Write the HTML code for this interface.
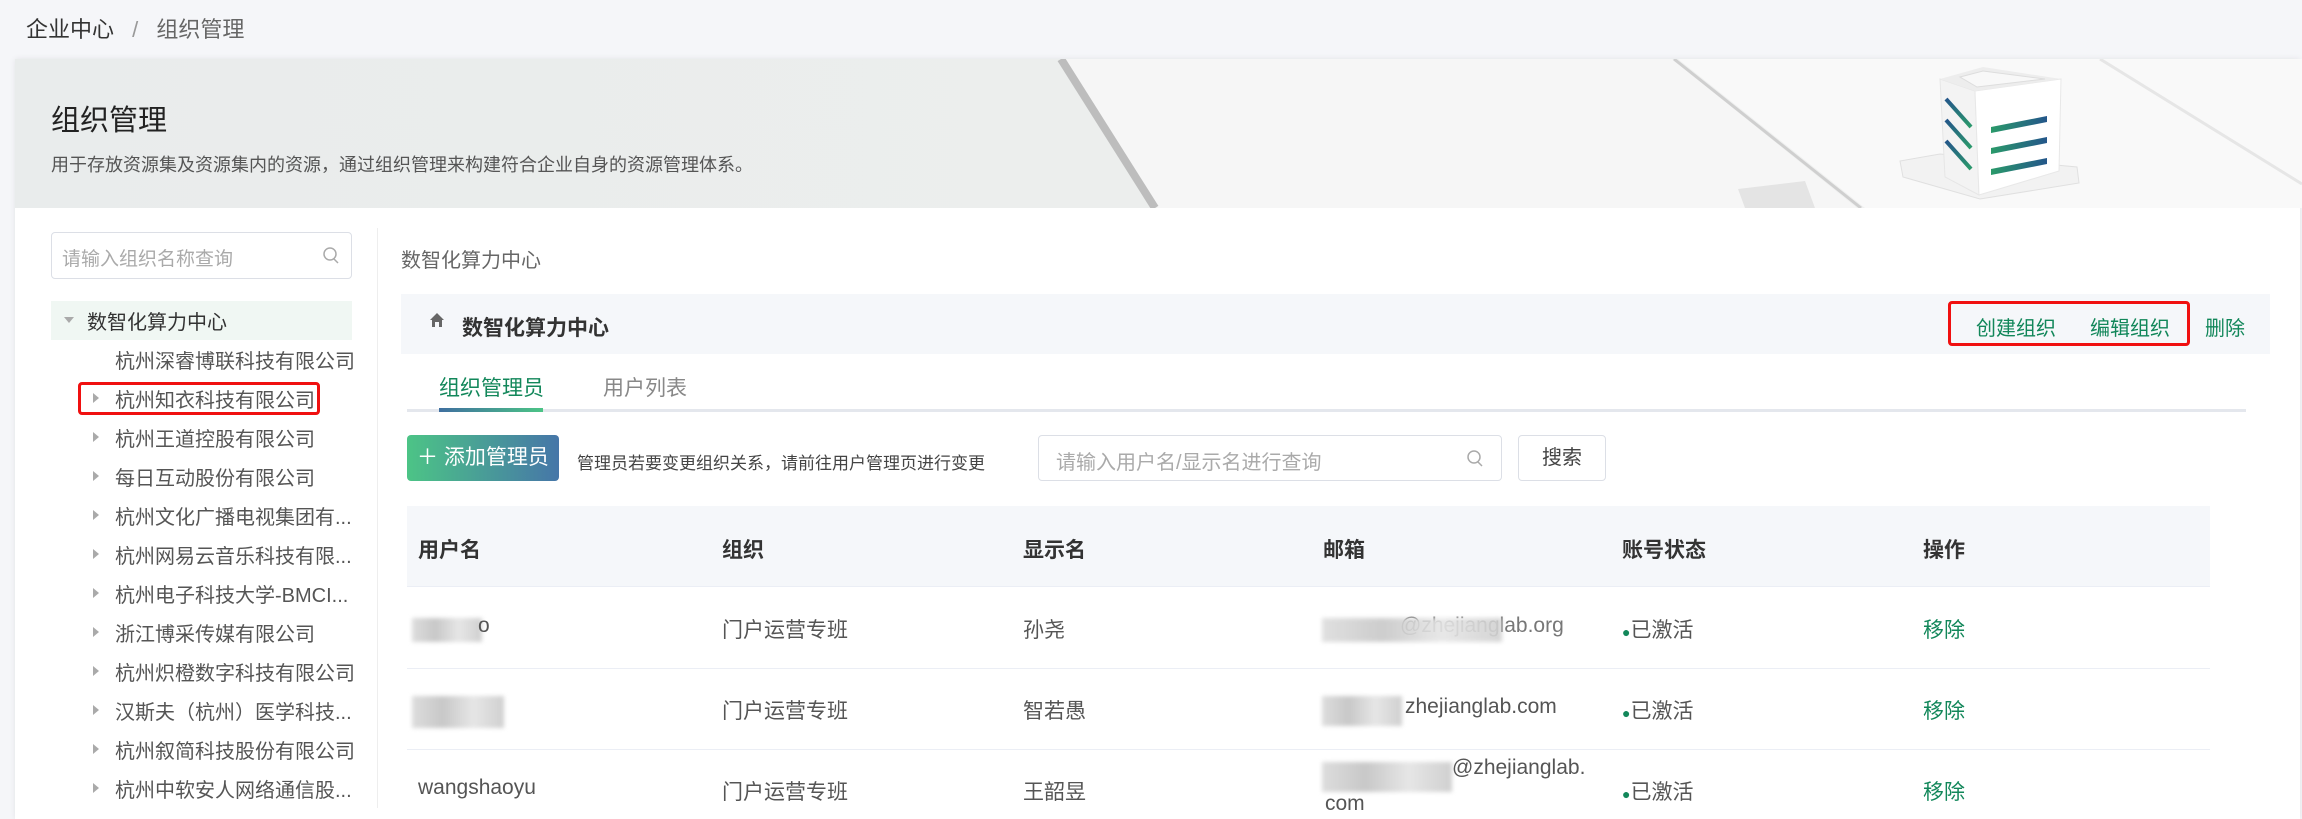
<!DOCTYPE html>
<html><head><meta charset="utf-8"><style>
*{margin:0;padding:0;box-sizing:border-box}
body{width:2302px;height:808px;overflow:hidden;background:#f5f6f9;font-family:"Liberation Sans","Noto Sans CJK SC",sans-serif;color:#333;position:relative}
.a{position:absolute;white-space:nowrap}
.g{color:#12875a}
.tree{font-size:20px;color:#555}
.tri{position:absolute;width:0;height:0;border-left:6px solid #aaa;border-top:5px solid transparent;border-bottom:5px solid transparent}
.th{font-size:21px;font-weight:bold;color:#333}
.td{font-size:21px;color:#555}
.blur{position:absolute;background:linear-gradient(90deg,#ddd,#c8c8c8,#e6e6e6,#d0d0d0);filter:blur(2px)}
</style></head><body>
<div class="a" style="left:26px;top:12px;font-size:22px;color:#333">企业中心 <span style="color:#999;margin:0 12px">/</span> <span style="color:#666">组织管理</span></div>

<div class="a" style="left:15px;top:59px;width:2285px;height:760px;background:#fff;box-shadow:0 0 6px rgba(0,0,0,.08)"></div>
<!-- banner -->
<svg class="a" style="left:15px;top:59px" width="2287" height="149">
<defs><linearGradient id="bg" x1="0" x2="1"><stop offset="0" stop-color="#e9ecec"/><stop offset=".5" stop-color="#eceeed"/><stop offset="1" stop-color="#f2f2f2"/></linearGradient>
<linearGradient id="st" x1="0" x2="1"><stop offset="0" stop-color="#2a9a6a"/><stop offset="1" stop-color="#24568a"/></linearGradient>
<linearGradient id="st2" x1="0" x2="0" y1="0" y2="1"><stop offset="0" stop-color="#24568a"/><stop offset="1" stop-color="#2a9a6a"/></linearGradient></defs>
<rect width="2287" height="149" fill="url(#bg)"/>
<polygon points="1050,0 1657,0 1842,149 1142,149" fill="#f6f6f6"/>
<line x1="1046" y1="0" x2="1140" y2="149" stroke="#bdbdbd" stroke-width="8"/>
<line x1="1659" y1="0" x2="1846" y2="149" stroke="#cfcfcf" stroke-width="3"/>
<polygon points="1663,0 2287,0 2287,149 1850,149" fill="#f9f9f9"/>
<line x1="2085" y1="0" x2="2287" y2="125" stroke="#e6e6e6" stroke-width="3"/>
<polygon points="1723,130 1790,122 1800,149 1730,149" fill="#e4e4e4"/>
<polygon points="1885,102 1925,95 2062,108 2064,124 1965,140 1888,118" fill="#f2f2f2" stroke="#e0e0e0"/>
<polygon points="1925,20 1960,32 1964,136 1930,118" fill="#f3f3f3" stroke="#e6e6e6"/>
<polygon points="1960,32 2046,20 2044,112 1964,136" fill="#fff" stroke="#e8e8e8"/>
<polygon points="1925,20 1968,8 2046,20 1960,32" fill="#ededed"/>
<polygon points="1945,18 1968,12 2030,20 1962,28" fill="#f8f8f8" stroke="#ddd"/>
<polygon points="1976,68 2032,57 2032,63 1976,74" fill="url(#st)"/>
<polygon points="1976,89 2032,78 2032,84 1976,95" fill="url(#st)"/>
<polygon points="1976,110 2032,99 2032,105 1976,116" fill="url(#st)"/>
<line x1="1931" y1="40" x2="1956" y2="68" stroke="url(#st2)" stroke-width="4"/>
<line x1="1931" y1="61" x2="1956" y2="89" stroke="url(#st2)" stroke-width="4"/>
<line x1="1931" y1="82" x2="1956" y2="110" stroke="url(#st2)" stroke-width="4"/>
</svg>
<div class="a" style="left:51px;top:97px;font-size:29px;color:#222">组织管理</div>
<div class="a" style="left:51px;top:151px;font-size:18px;color:#555">用于存放资源集及资源集内的资源，通过组织管理来构建符合企业自身的资源管理体系。</div>

<!-- left -->
<div class="a" style="left:51px;top:232px;width:301px;height:47px;border:1px solid #dcdfe6;border-radius:4px"></div>
<div class="a" style="left:62px;top:244px;font-size:19px;color:#aaa">请输入组织名称查询</div>
<svg class="a" style="left:322px;top:246px" width="18" height="20"><circle cx="8" cy="8" r="6" fill="none" stroke="#aaa" stroke-width="1.5"/><line x1="12" y1="13" x2="16" y2="17" stroke="#aaa" stroke-width="1.5"/></svg>
<div class="a" style="left:377px;top:228px;width:1px;height:580px;background:#eee"></div>

<div class="a" style="left:51px;top:301px;width:301px;height:39px;background:#f0f7f3"></div>
<div class="a" style="left:64px;top:317px;width:0;height:0;border-top:6px solid #aaa;border-left:5px solid transparent;border-right:5px solid transparent"></div>
<div class="a tree" style="left:87px;top:306px;color:#333">数智化算力中心</div>
<div class="a tree" style="left:115px;top:345px">杭州深睿博联科技有限公司</div>
<div class="a" style="left:78px;top:382px;width:242px;height:33px;border:3px solid #f01010;border-radius:4px"></div>
<div class="tri" style="left:93px;top:393px"></div><div class="a tree" style="left:115px;top:384px">杭州知衣科技有限公司</div>
<div class="tri" style="left:93px;top:432px"></div><div class="a tree" style="left:115px;top:423px">杭州王道控股有限公司</div>
<div class="tri" style="left:93px;top:471px"></div><div class="a tree" style="left:115px;top:462px">每日互动股份有限公司</div>
<div class="tri" style="left:93px;top:510px"></div><div class="a tree" style="left:115px;top:501px">杭州文化广播电视集团有...</div>
<div class="tri" style="left:93px;top:549px"></div><div class="a tree" style="left:115px;top:540px">杭州网易云音乐科技有限...</div>
<div class="tri" style="left:93px;top:588px"></div><div class="a tree" style="left:115px;top:579px">杭州电子科技大学-BMCI...</div>
<div class="tri" style="left:93px;top:627px"></div><div class="a tree" style="left:115px;top:618px">浙江博采传媒有限公司</div>
<div class="tri" style="left:93px;top:666px"></div><div class="a tree" style="left:115px;top:657px">杭州炽橙数字科技有限公司</div>
<div class="tri" style="left:93px;top:705px"></div><div class="a tree" style="left:115px;top:696px">汉斯夫（杭州）医学科技...</div>
<div class="tri" style="left:93px;top:744px"></div><div class="a tree" style="left:115px;top:735px">杭州叙简科技股份有限公司</div>
<div class="tri" style="left:93px;top:783px"></div><div class="a tree" style="left:115px;top:774px">杭州中软安人网络通信股...</div>

<!-- right -->
<div class="a" style="left:401px;top:244px;font-size:20px;color:#666">数智化算力中心</div>
<div class="a" style="left:401px;top:294px;width:1869px;height:60px;background:#f5f7fa"></div>
<svg class="a" style="left:429px;top:312px" width="16" height="16"><path d="M1 8 L8 1 L15 8 L13 8 L13 15 L10 15 L10 10 L6 10 L6 15 L3 15 L3 8 Z" fill="#666"/></svg>
<div class="a" style="left:462px;top:312px;font-size:21px;font-weight:bold;color:#333">数智化算力中心</div>
<div class="a" style="left:1948px;top:301px;width:242px;height:45px;border:3px solid #f01010;border-radius:4px"></div>
<div class="a g" style="left:1976px;top:312px;font-size:20px">创建组织</div>
<div class="a g" style="left:2090px;top:312px;font-size:20px">编辑组织</div>
<div class="a g" style="left:2205px;top:312px;font-size:20px">删除</div>

<div class="a g" style="left:439px;top:372px;font-size:21px">组织管理员</div>
<div class="a" style="left:603px;top:372px;font-size:21px;color:#888">用户列表</div>
<div class="a" style="left:407px;top:409px;width:1839px;height:3px;background:#e4e7ed"></div>
<div class="a" style="left:439px;top:408px;width:104px;height:4px;background:linear-gradient(90deg,#3f6fa0,#4cc486)"></div>

<div class="a" style="left:407px;top:435px;width:152px;height:46px;border-radius:4px;background:linear-gradient(90deg,#4cc486,#4676a8);color:#fff;font-size:21px;line-height:46px;padding-left:10px">＋ 添加管理员</div>
<div class="a" style="left:577px;top:449px;font-size:17px;color:#444">管理员若要变更组织关系，请前往用户管理页进行变更</div>
<div class="a" style="left:1038px;top:435px;width:464px;height:46px;border:1px solid #dcdfe6;border-radius:4px"></div>
<div class="a" style="left:1056px;top:446px;font-size:20px;color:#aaa">请输入用户名/显示名进行查询</div>
<svg class="a" style="left:1466px;top:449px" width="18" height="20"><circle cx="8" cy="8" r="6" fill="none" stroke="#aaa" stroke-width="1.5"/><line x1="12" y1="13" x2="16" y2="17" stroke="#aaa" stroke-width="1.5"/></svg>
<div class="a" style="left:1518px;top:435px;width:88px;height:46px;border:1px solid #dcdfe6;border-radius:4px;text-align:center;line-height:44px;font-size:20px;color:#444">搜索</div>

<div class="a" style="left:407px;top:506px;width:1803px;height:81px;background:#f5f7fa;border-bottom:1px solid #ebeef5"></div>
<div class="a th" style="left:418px;top:534px">用户名</div>
<div class="a th" style="left:722px;top:534px">组织</div>
<div class="a th" style="left:1023px;top:534px">显示名</div>
<div class="a th" style="left:1323px;top:534px">邮箱</div>
<div class="a th" style="left:1622px;top:534px">账号状态</div>
<div class="a th" style="left:1923px;top:534px">操作</div>

<div class="a" style="left:407px;top:668px;width:1803px;height:1px;background:#ebeef5"></div>
<div class="a" style="left:407px;top:749px;width:1803px;height:1px;background:#ebeef5"></div>

<div class="blur" style="left:412px;top:618px;width:70px;height:24px"></div><div class="a td" style="left:478px;top:614px">o</div>
<div class="a td" style="left:722px;top:614px">门户运营专班</div>
<div class="a td" style="left:1023px;top:614px">孙尧</div>
<div class="a td" style="left:1400px;top:614px;color:#777">@zhejianglab.org</div>
<div class="blur" style="left:1322px;top:618px;width:180px;height:24px;opacity:.9"></div>
<div class="a td" style="left:1622px;top:614px"><span style="color:#12875a;font-size:14px">●</span>已激活</div>
<div class="a g td" style="left:1923px;top:614px;color:#12875a">移除</div>

<div class="blur" style="left:412px;top:696px;width:92px;height:32px"></div>
<div class="a td" style="left:722px;top:695px">门户运营专班</div>
<div class="a td" style="left:1023px;top:695px">智若愚</div>
<div class="blur" style="left:1322px;top:696px;width:80px;height:30px"></div>
<div class="a td" style="left:1405px;top:695px">zhejianglab.com</div>
<div class="a td" style="left:1622px;top:695px"><span style="color:#12875a;font-size:14px">●</span>已激活</div>
<div class="a td" style="left:1923px;top:695px;color:#12875a">移除</div>

<div class="a td" style="left:418px;top:776px">wangshaoyu</div>
<div class="a td" style="left:722px;top:776px">门户运营专班</div>
<div class="a td" style="left:1023px;top:776px">王韶昱</div>
<div class="blur" style="left:1322px;top:762px;width:130px;height:30px"></div>
<div class="a td" style="left:1452px;top:756px">@zhejianglab.</div>
<div class="a td" style="left:1325px;top:792px">com</div>
<div class="a td" style="left:1622px;top:776px"><span style="color:#12875a;font-size:14px">●</span>已激活</div>
<div class="a td" style="left:1923px;top:776px;color:#12875a">移除</div>
</body></html>
